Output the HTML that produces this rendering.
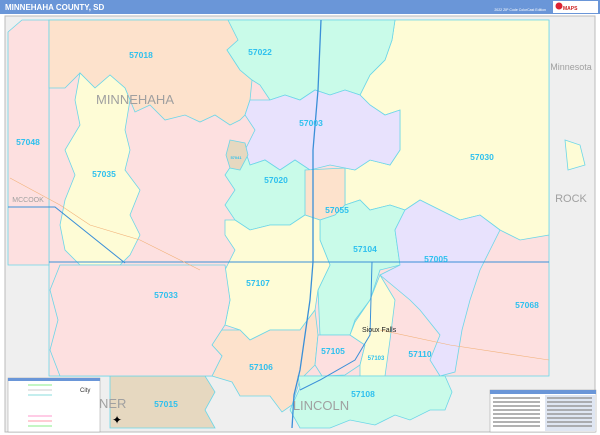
<!DOCTYPE html>
<html><head><meta charset="utf-8"><style>
*{margin:0;padding:0}
body{width:600px;height:435px;overflow:hidden;background:#fff;font-family:"Liberation Sans",sans-serif}
svg{display:block}
.z{font-family:"Liberation Sans",sans-serif;font-weight:bold;fill:#2ec0ee;font-size:8.5px;text-anchor:middle}
.c{font-family:"Liberation Sans",sans-serif;fill:#a0a0a0;text-anchor:middle}
</style></head><body>
<svg width="600" height="435" viewBox="0 0 600 435">
<rect width="600" height="435" fill="#fff"/>
<rect x="0" y="0" width="600" height="14" fill="#6a96d8"/>
<text x="5" y="10" fill="#fff" font-size="8" font-weight="bold" font-family="Liberation Sans">MINNEHAHA COUNTY, SD</text>
<text x="546" y="11" fill="#fff" font-size="3.5" text-anchor="end" font-family="Liberation Sans">2022 ZIP Code ColorCast Edition</text>
<rect x="553" y="1" width="45" height="12" fill="#fff"/>
<circle cx="559" cy="6" r="3.5" fill="#d23"/><text x="563" y="10" font-size="5" fill="#c22" font-weight="bold" font-family="Liberation Sans">MAPS</text>
<rect x="5" y="16" width="590" height="416" fill="#efefef" stroke="#bbb" stroke-width="1"/>
<g stroke="#6cd6e8" stroke-width="0.8">
<rect x="49" y="20" width="500" height="356" fill="#fde0e0"/>
<polygon fill="#fde0e0" points="8,32 22,20 49,20 49,265 8,265"/>
<polygon fill="#fde2cc" points="49,20 240,20 238,45 227,50 240,70 252,80 250,100 245,115 240,120 230,125 215,115 200,122 185,115 165,120 150,105 135,112 125,88 110,75 95,88 80,73 65,88 49,88"/>
<polygon fill="#fefcd6" points="80,73 95,88 110,75 125,88 130,100 125,130 130,150 125,170 140,190 130,215 140,235 130,255 120,265 80,265 65,250 60,225 65,200 75,175 65,150 80,125 75,100"/>
<polygon fill="#fefcd6" points="395,20 549,20 549,235 520,240 500,230 480,215 460,220 440,210 420,200 405,210 390,205 370,210 360,200 345,205 345,168 355,170 370,160 390,165 400,150 400,110 385,115 370,105 360,95 370,75 385,60 392,40"/>
<polygon fill="#c9fbe9" points="228,20 395,20 392,40 385,60 370,75 360,95 345,90 330,95 315,90 300,100 285,95 270,100 260,85 252,80 240,70 227,50 238,40"/>
<polygon fill="#e8e2fd" points="250,100 270,100 285,95 300,100 315,90 330,95 345,90 360,95 370,105 385,115 400,110 400,150 390,165 370,160 355,170 330,165 310,170 295,160 280,170 265,160 250,165 245,150 255,130 245,115"/>
<polygon fill="#c9fbe9" points="245,150 250,165 265,160 280,170 295,160 310,170 305,215 290,225 270,225 250,230 235,220 225,205 235,190 225,175 235,160"/>
<polygon fill="#e6d8c0" points="230,140 245,143 248,155 240,170 230,168 226,155"/>
<polygon fill="#fde2cc" points="305,170 345,168 345,205 335,215 320,220 305,215"/>
<polygon fill="#c9fbe9" points="345,205 360,200 370,210 390,205 405,210 395,230 400,265 380,270 370,300 355,320 350,335 320,335 318,290 330,265 320,240 320,220 335,215"/>
<polygon fill="#e8e2fd" points="405,210 420,200 440,210 460,220 480,215 500,230 490,250 480,270 470,300 462,330 455,372 440,376 430,360 440,335 420,310 410,300 398,290 380,275 400,265 395,230"/>
<polygon fill="#fefcd6" points="225,220 235,220 250,230 270,225 290,225 305,215 320,220 320,240 330,265 318,290 315,310 300,330 270,330 250,340 240,330 225,325 230,300 225,270 235,250 225,235"/>
<polygon fill="#fde2cc" points="218,330 240,330 250,340 270,330 300,330 315,310 318,335 315,365 300,380 292,405 282,412 270,396 240,396 232,382 212,376 222,356 212,345"/>
<polygon fill="#fde0e0" points="318,335 350,335 365,345 360,365 345,375 322,376 315,365"/>
<polygon fill="#fefcd6" points="355,322 370,300 380,275 395,300 390,340 385,376 360,376 360,365 365,345 350,335"/>
<polygon fill="#c9fbe9" points="298,376 445,376 452,392 445,410 430,410 410,420 395,415 375,425 350,420 330,428 300,428 290,410 300,388"/>
<polygon fill="#e6d8c0" points="110,376 205,376 215,392 205,410 215,428 110,428"/>
<polygon fill="#fde0e0" points="60,265 225,265 230,300 225,325 212,345 222,356 212,376 60,376 50,350 58,320 50,290"/>
<polygon fill="#fefcd6" points="565,140 580,145 585,165 568,170"/>
</g>
<g fill="none">
<path d="M321,20 L318,90 L313,150 L313,262 L310,300 L300,370 L294,395 L292,428" stroke="#3a8fd8" stroke-width="1.3"/>
<path d="M49,262 L549,262" stroke="#3a8fd8" stroke-width="1"/>
<path d="M8,207 L55,207 L125,263" stroke="#3a8fd8" stroke-width="1"/>
<path d="M372,262 L370,335 L355,360 L320,380 L300,390" stroke="#3a8fd8" stroke-width="1"/>
<path d="M10,178 L60,205 L90,225 L140,240 L200,270" stroke="#f2b27a" stroke-width="0.6"/>
<path d="M380,330 L450,345 L549,360" stroke="#f2b27a" stroke-width="0.6"/>
</g>
<text class="c" x="135" y="104" font-size="13">MINNEHAHA</text>
<text class="c" x="321" y="410" font-size="13">LINCOLN</text>
<text class="c" x="108" y="408" font-size="13">RNER</text>
<text class="c" x="571" y="202" font-size="11">ROCK</text>
<text class="c" x="571" y="70" font-size="9" fill="#9c9">Minnesota</text>
<text class="c" x="28" y="202" font-size="7">MCCOOK</text>
<g class="z">
<text x="141" y="58">57018</text><text x="260" y="55">57022</text><text x="311" y="126">57003</text>
<text x="28" y="145">57048</text><text x="104" y="177">57035</text><text x="276" y="183">57020</text>
<text x="236" y="159" font-size="4">57041</text><text x="337" y="213">57055</text><text x="482" y="160">57030</text>
<text x="365" y="252">57104</text><text x="436" y="262">57005</text><text x="166" y="298">57033</text>
<text x="258" y="286">57107</text><text x="527" y="308">57068</text><text x="333" y="354">57105</text>
<text x="376" y="360" font-size="6">57103</text><text x="420" y="357">57110</text><text x="261" y="370">57106</text>
<text x="363" y="397">57108</text><text x="166" y="407">57015</text>
</g>
<text x="362" y="332" font-size="7" fill="#222" font-family="Liberation Sans">Sioux Falls</text>
<rect x="8" y="378" width="92" height="54" fill="#fff" stroke="#999" stroke-width="0.5"/>
<rect x="8" y="378" width="92" height="3" fill="#6a96d8"/>
<g stroke-width="1"><line x1="28" y1="385" x2="52" y2="385" stroke="#8e8"/><line x1="28" y1="390" x2="52" y2="390" stroke="#ccc"/><line x1="28" y1="395" x2="52" y2="395" stroke="#8dd"/><line x1="28" y1="416" x2="52" y2="416" stroke="#f9c"/><line x1="28" y1="421" x2="52" y2="421" stroke="#f9a"/><line x1="28" y1="426" x2="52" y2="426" stroke="#8e8"/></g>
<text x="80" y="392" font-size="6" font-family="Liberation Sans" fill="#333">City</text>
<text x="117" y="424" font-size="12" text-anchor="middle" fill="#000">✦</text>
<rect x="490" y="390" width="106" height="42" fill="#fff" stroke="#999" stroke-width="0.5"/>
<rect x="490" y="390" width="106" height="4" fill="#6a96d8"/>
<rect x="545" y="395" width="50" height="36" fill="#dfe6f2"/>
<g stroke="#999" stroke-width="1.5">
<line x1="493" y1="398" x2="540" y2="398"/><line x1="493" y1="402" x2="540" y2="402"/><line x1="493" y1="406" x2="540" y2="406"/><line x1="493" y1="410" x2="540" y2="410"/><line x1="493" y1="414" x2="540" y2="414"/><line x1="493" y1="418" x2="540" y2="418"/><line x1="493" y1="422" x2="540" y2="422"/><line x1="493" y1="426" x2="540" y2="426"/>
<line x1="547" y1="398" x2="592" y2="398"/><line x1="547" y1="402" x2="592" y2="402"/><line x1="547" y1="406" x2="592" y2="406"/><line x1="547" y1="410" x2="592" y2="410"/><line x1="547" y1="414" x2="592" y2="414"/><line x1="547" y1="418" x2="592" y2="418"/><line x1="547" y1="422" x2="592" y2="422"/><line x1="547" y1="426" x2="592" y2="426"/>
</g>
</svg>
</body></html>
